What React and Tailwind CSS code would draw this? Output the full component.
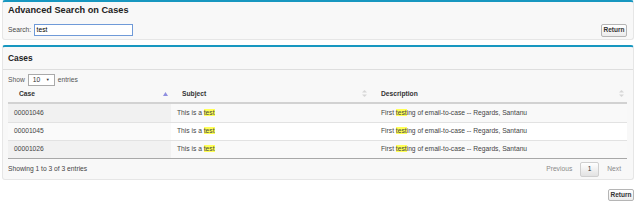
import React from "react";

const rows = [
  { id: "00001046", odd: true },
  { id: "00001045", odd: false },
  { id: "00001026", odd: true },
];

function Hl({ children }) {
  return <span className="bg-[#ffff55]">{children}</span>;
}

function SortBoth() {
  return (
    <svg width="5" height="7" viewBox="0 0 5 7">
      <path d="M2.5 0 L5 2.6 L0 2.6 Z" fill="#d6d6d6" />
      <path d="M2.5 7 L5 4.4 L0 4.4 Z" fill="#d6d6d6" />
    </svg>
  );
}

function SortUp() {
  return (
    <svg width="5" height="4" viewBox="0 0 5 4">
      <path d="M2.5 0 L5 4 L0 4 Z" fill="#8f8fe0" />
    </svg>
  );
}

function ReturnButton({ tall }) {
  return (
    <button
      className={`${
        tall ? "h-[13px]" : "h-[12px]"
      } w-[26px] rounded-[2px] border border-[#b5b5b5] bg-gradient-to-b from-white to-[#ececec] text-[6.5px] font-bold leading-none text-[#333]`}
    >
      Return
    </button>
  );
}

export default function App() {
  return (
    <div className="h-[206px] w-[640px] bg-white font-['Liberation_Sans',Arial,sans-serif] text-[6.7px] text-[#333]">
      {/* search block */}
      <div className="ml-[2px] flex h-[40px] w-[632px] flex-col rounded-[3px] border-x border-b border-t-2 border-x-[#e6e6e6] border-b-[#e6e6e6] border-t-[#1797c0] bg-[#f8f8f8] pl-[5px] pr-[6px] pt-[3px]">
        <h2 className="text-[9.2px] font-bold leading-[11px] text-[#222]">
          Advanced Search on Cases
        </h2>
        <div className="mt-[8px] flex items-start justify-between">
          <div className="flex h-[12px] items-center gap-[3px]">
            <span className="text-[#4a4a4a]">Search:</span>
            <div className="flex h-[12px] w-[99px] items-center border border-[#6f9ad8] bg-white pl-[1.5px] text-black">
              test
            </div>
          </div>
          <ReturnButton tall />
        </div>
      </div>

      {/* results block */}
      <div className="ml-[2px] mt-[5px] flex w-[632px] flex-col rounded-[3px] border-x border-b border-t-2 border-x-[#e6e6e6] border-b-[#e6e6e6] border-t-[#1797c0] bg-[#f8f8f8]">
        <div className="flex h-[23px] items-center border-b border-[#dedede] pl-[5px]">
          <h2 className="text-[8.4px] font-bold leading-[10px] text-[#222]">Cases</h2>
        </div>

        <div className="ml-[5px] w-[619px]">
          <div className="mt-[4px] flex h-[12px] items-center text-[#555]">
            <span>Show</span>
            <div className="ml-[3px] flex h-[12px] w-[27px] items-center justify-between border border-[#aaa] bg-white pl-[4px] pr-[4px] text-[#333]">
              <span>10</span>
              <span className="text-[4px]">▼</span>
            </div>
            <span className="ml-[3px]">entries</span>
          </div>

          {/* header */}
          <div className="flex h-[18px] items-center border-b-2 border-[#d2d2d2] font-bold text-[#333]">
            <div className="flex w-[163px] items-center justify-between pl-[11px] pr-[3px]">
              <span>Case</span>
              <SortUp />
            </div>
            <div className="flex w-[204px] items-center justify-between pl-[11px] pr-[8px]">
              <span>Subject</span>
              <SortBoth />
            </div>
            <div className="flex w-[252px] items-center justify-between pl-[6px] pr-[3px]">
              <span>Description</span>
              <SortBoth />
            </div>
          </div>

          {/* rows */}
          <div className="border-b border-[#a8a8a8]">
            {rows.map((row, i) => (
              <div
                key={row.id}
                className={`flex h-[18px] items-center text-[#444] ${
                  i > 0 ? "border-t border-[#e2e2e2]" : ""
                } ${row.odd ? "bg-[#f9f9f9]" : "bg-white"}`}
              >
                <div
                  className={`flex h-full w-[163px] items-center pl-[6px] ${
                    row.odd ? "bg-[#f1f1f1]" : "bg-[#fafafa]"
                  }`}
                >
                  {row.id}
                </div>
                <div className="w-[204px] pl-[6px]">
                  This is a <Hl>test</Hl>
                </div>
                <div className="w-[252px] pl-[6px]">
                  First <Hl>test</Hl>ing of email-to-case -- Regards, Santanu
                </div>
              </div>
            ))}
          </div>

          {/* footer */}
          <div className="flex h-[20px] items-center justify-between pr-[6px] text-[#444]">
            <span>Showing 1 to 3 of 3 entries</span>
            <div className="flex items-center text-[#8a8a8a]">
              <span>Previous</span>
              <div className="ml-[8px] flex h-[15px] w-[19px] items-center justify-center rounded-[2px] border border-[#cfcfcf] bg-gradient-to-b from-white to-[#e2e2e2] text-[#333]">
                1
              </div>
              <span className="ml-[8px]">Next</span>
            </div>
          </div>
        </div>
      </div>

      <div className="mt-[9px] flex justify-end pr-[6px]">
        <ReturnButton />
      </div>
    </div>
  );
}
